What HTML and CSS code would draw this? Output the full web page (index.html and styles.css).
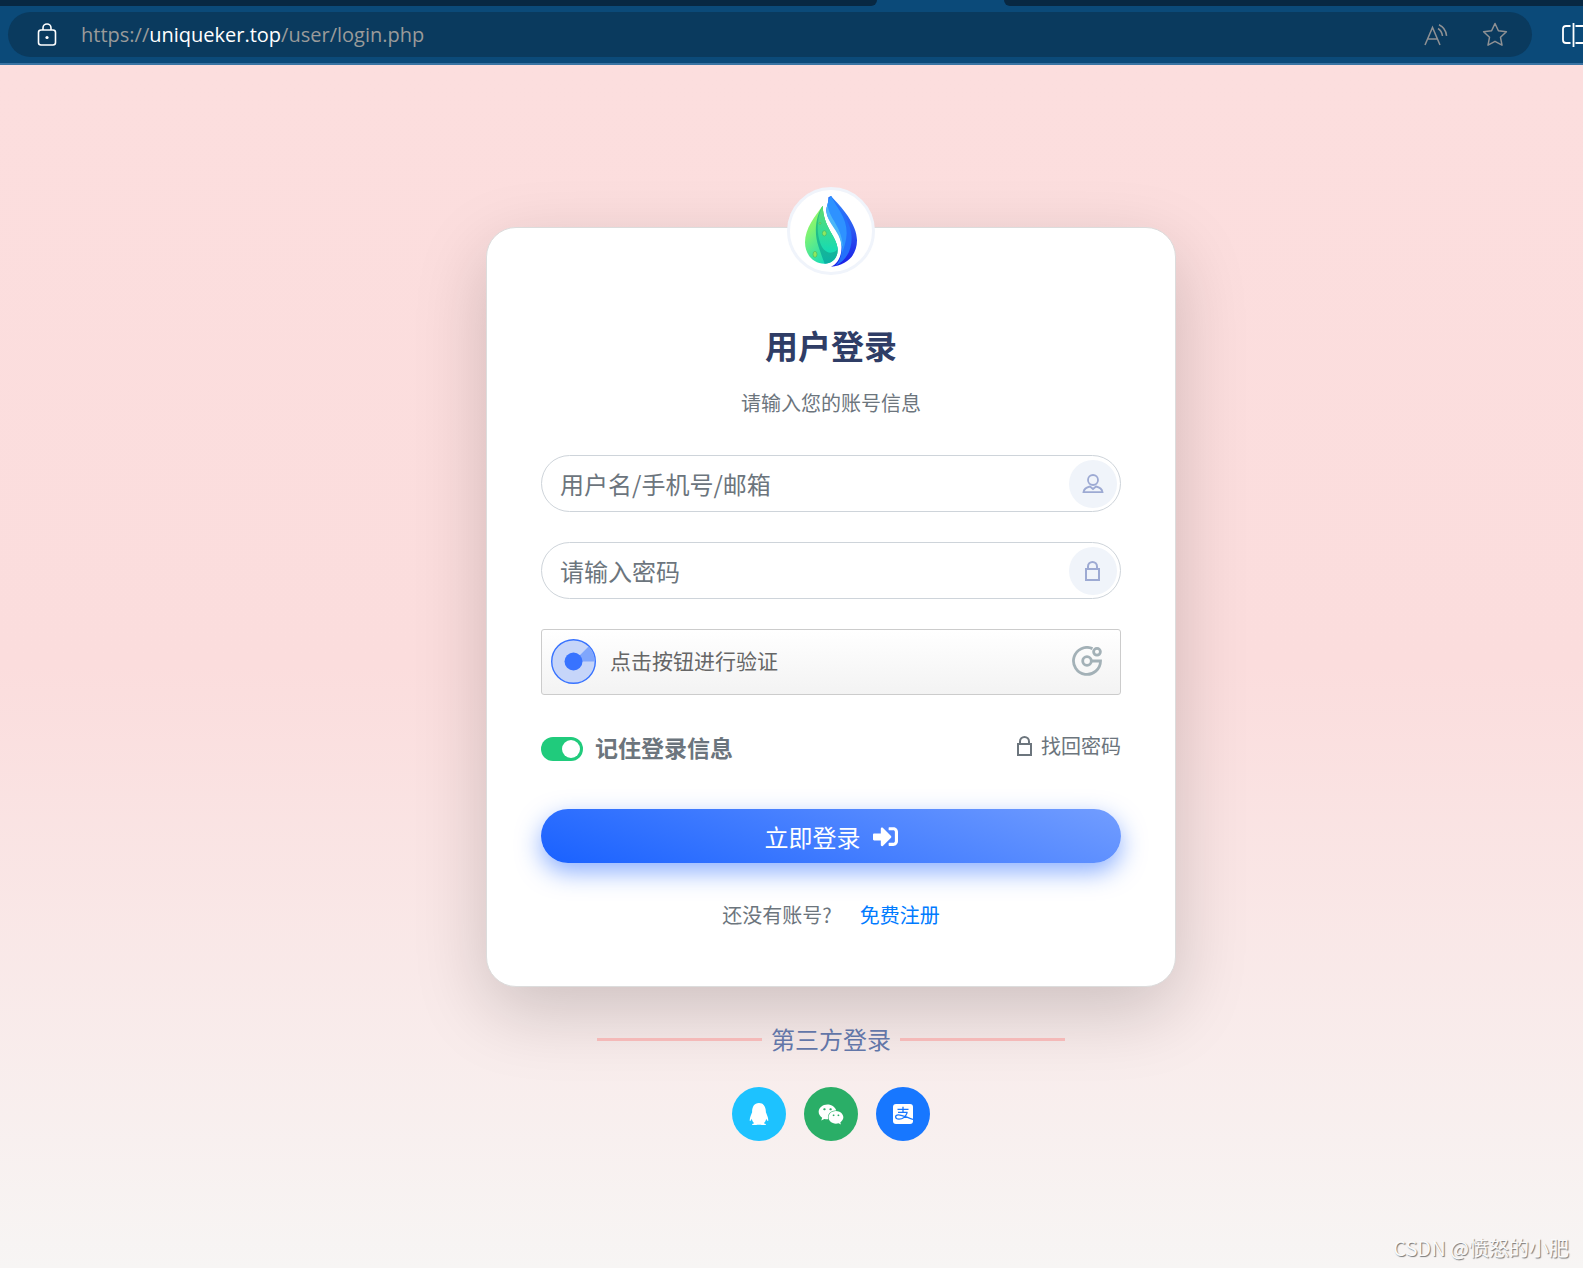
FILE: index.html
```html
<!DOCTYPE html>
<html lang="zh-CN">
<head>
  <meta charset="utf-8">
  <title>用户登录</title>
  <link rel="stylesheet" href="styles.css">
</head>
<body>
  <header class="browser">
    <div class="tabs">
      <span class="tab tab-left"></span>
      <span class="tab tab-right"></span>
    </div>
    <div class="toolbar">
      <div class="address">
        <svg class="site-lock" viewBox="0 0 20 24" fill="none" stroke="#fff" stroke-width="1.6">
          <rect x="1.500" y="7" width="17" height="15" rx="2.5"/>
          <path d="M6 7V5a4 4 0 0 1 8 0v2"/>
          <circle cx="10" cy="14.500" r="1.600" fill="#fff" stroke="none"/>
        </svg>
        <p class="url">https://<span class="host">uniqueker.top</span>/user/login.php</p>
        <svg class="read-aloud" viewBox="0 0 24 22" fill="none" stroke="#8f9194" stroke-width="1.500">
          <path d="M1 21 8.500 3.500 16 21M4 15h9M14 4.500c2.500 1.500 4 4 4.500 7.500M15 .8c4.500 2 7 6 7.600 11"/>
        </svg>
        <svg class="star" viewBox="0 0 26 25" fill="none" stroke="#8f9194" stroke-width="1.500" stroke-linejoin="round">
          <path d="m13 1.500 3.400 7.300 8 1-5.900 5.500 1.500 7.900-7-3.900-7 3.900 1.500-7.900L1.600 9.800l8-1z"/>
        </svg>
      </div>
      <svg class="split" viewBox="0 0 26 26" fill="none" stroke="#fff" stroke-width="1.800">
        <path d="M8.500 4H4a3 3 0 0 0-3 3v11a3 3 0 0 0 3 3h4.500M13.500 4H22a3 3 0 0 1 3 3v11a3 3 0 0 1-3 3h-8.500"/>
        <path d="M11.500 1v24"/>
      </svg>
    </div>
  </header>

  <main class="page">
    <section class="card">
      <div class="logo">
        <svg viewBox="63 63 240 240">
          <defs>
            <linearGradient id="leaf" x1="0" y1="0" x2=".6" y2="1">
              <stop offset="0" stop-color="#a5fb60"/><stop offset=".4" stop-color="#7df374"/><stop offset="1" stop-color="#14dbbb"/>
            </linearGradient>
            <linearGradient id="leafMid" x1="0" y1="0" x2="0" y2="1">
              <stop offset="0" stop-color="#5fdc6e"/><stop offset="1" stop-color="#14dbb5"/>
            </linearGradient>
            <linearGradient id="leafDark" x1="0" y1="0" x2="0" y2="1">
              <stop offset="0" stop-color="#35c96f"/><stop offset="1" stop-color="#0bb0a5"/>
            </linearGradient>
            <linearGradient id="water" x1="0" y1="0" x2="0" y2="1">
              <stop offset="0" stop-color="#2f86fb"/><stop offset=".5" stop-color="#2b55f0"/><stop offset="1" stop-color="#1a1de6"/>
            </linearGradient>
          </defs>
          <path fill="url(#leaf)" d="M158 107C135 139 105 174 105 217c0 38 26 64 58 64 22 0 41-17 40-42-2-40-43-65-45-132z"/>
          <path fill="url(#leafDark)" d="M158 107c-20 30-28 78-12 124 8 24 14 40 18 50 22 0 40-17 39-42-2-40-43-65-45-132z"/>
          <path fill="url(#leafMid)" d="M158 107c-16 30-18 72-10 104 7 28 24 41 40 36 8-2 12-6 15-11-3-40-43-62-45-129z"/>
          <path fill="url(#water)" d="M183 78c31 33 78 83 78 133 0 46-32 76-78 79 22-9 33-36 32-63-2-55-60-78-43-122 2-10 5-17 11-27z"/>
          <path fill="#2470fb" d="M183 78c22 35 62 75 62 125 0 40-18 70-50 85 16-14 21-38 20-61 0-52-46-90-40-145z"/>
          <path fill="#2e92ff" d="M183 78c16 33 48 64 47 112-1 22-7 43-14 60 2-15 0-30-2-37-12-43-54-68-42-108 2-10 5-17 11-27z"/>
          <path fill="#4bb6f8" d="M173 104c3 40 42 64 45 122l-3 5c-2-52-54-74-44-120z"/>
          <g fill="#8fe75f" stroke="#45bb64" stroke-width="2">
            <ellipse cx="163" cy="190" rx="6" ry="8"/><ellipse cx="135" cy="253" rx="6" ry="9"/><circle cx="150" cy="160" r="3"/>
          </g>
        </svg>
      </div>

      <h1 class="title">用户登录</h1>
      <p class="subtitle">请输入您的账号信息</p>

      <form class="form">
        <div class="field">
          <input class="field-input" type="text" aria-label="用户名" placeholder="用户名/手机号/邮箱">
          <span class="field-icon">
            <svg class="icon-user" viewBox="0 0 22 20" fill="none" stroke="#9daad3" stroke-width="1.800">
              <circle cx="11" cy="6" r="5"/>
              <path d="M8 12.500c-3.500.7-6 2.500-6.500 5.700h19c-.5-3.200-3-5-6.500-5.700L11 15z"/>
            </svg>
          </span>
        </div>
        <div class="field">
          <input class="field-input" type="password" aria-label="密码" placeholder="请输入密码">
          <span class="field-icon">
            <svg class="icon-lock" viewBox="0 0 16 20" fill="none" stroke="#9daad3" stroke-width="2">
              <path d="M1 8h13v11H1zM3 8V5.500a4.500 4.500 0 0 1 9 0V8"/>
            </svg>
          </span>
        </div>

        <button class="captcha" type="button">
          <svg class="radar" viewBox="0 0 45 45">
            <circle cx="22.500" cy="22.500" r="21.800" fill="#c6d5f9" stroke="#3873ff" stroke-width="1.400"/>
            <path d="M22.500 22.500 37.600 7.400A21.300 21.300 0 0 1 43.800 22.500z" fill="#80a6fc"/>
            <circle cx="22.500" cy="22.500" r="9" fill="#3873ff"/>
          </svg>
          <span class="captcha-text">点击按钮进行验证</span>
          <svg class="captcha-mark" viewBox="0 0 30 30" fill="none" stroke="#a3b1b7" stroke-width="2.800">
            <path d="M20.500 2.600A13.500 13.500 0 1 0 28.500 15H19"/>
            <circle cx="15" cy="15" r="4.300"/>
            <circle cx="25" cy="5.800" r="3.400"/>
          </svg>
        </button>

        <div class="options">
          <label class="remember">
            <input class="switch" type="checkbox" checked>
            <span class="remember-text">记住登录信息</span>
          </label>
          <a class="forgot" href="#">
            <svg class="icon-lock" viewBox="0 0 16 20" fill="none" stroke="#6c757d" stroke-width="2">
              <path d="M1 8h13v11H1zM3 8V5.500a4.500 4.500 0 0 1 9 0V8"/>
            </svg>
            <span>找回密码</span>
          </a>
        </div>

        <button class="submit" type="submit">
          <span>立即登录</span>
          <svg class="icon-enter" viewBox="0 0 512 512" fill="currentColor">
            <path d="M416 448h-84c-6.600 0-12-5.400-12-12v-40c0-6.600 5.400-12 12-12h84c17.700 0 32-14.300 32-32V160c0-17.700-14.300-32-32-32h-84c-6.600 0-12-5.400-12-12V76c0-6.600 5.400-12 12-12h84c53 0 96 43 96 96v192c0 53-43 96-96 96zm-47-201L201 79c-15-15-41-4.500-41 17v96H24c-13.300 0-24 10.700-24 24v96c0 13.300 10.700 24 24 24h136v96c0 21.500 26 32 41 17l168-168c9.300-9.400 9.300-24.600 0-34z"/>
          </svg>
        </button>
      </form>

      <p class="signup"><span>还没有账号?</span><a class="signup-link" href="#">免费注册</a></p>
    </section>

    <div class="divider"><span>第三方登录</span></div>

    <nav class="social">
      <a class="social-link qq" href="#" aria-label="QQ">
        <svg class="icon-qq" viewBox="0 0 448 512" fill="#fff">
          <path d="M433.754 420.445c-11.526 1.393-44.860-52.741-44.860-52.741 0 31.345-16.136 72.247-51.051 101.786 16.842 5.192 54.843 19.167 45.803 34.421-7.316 12.343-125.510 7.881-159.632 4.037-34.122 3.844-152.316 8.306-159.632-4.037-9.045-15.250 28.918-29.214 45.783-34.415-34.920-29.539-51.059-70.445-51.059-101.792 0 0-33.334 54.134-44.859 52.741-5.370-.65-12.424-29.644 9.347-99.704 10.261-33.024 21.995-60.478 40.144-105.779C60.683 98.063 108.982.006 224 0c113.737.006 163.156 96.133 160.264 214.963 18.118 45.223 29.912 72.850 40.144 105.778 21.768 70.060 14.716 99.053 9.346 99.704z"/>
        </svg>
      </a>
      <a class="social-link wechat" href="#" aria-label="微信">
        <svg class="icon-wechat" viewBox="0 0 576 512" fill="#fff">
          <path d="M385.200 167.600c6.400 0 12.600.3 18.800 1.100C387.400 90.300 303.300 32 207.700 32 100.500 32 13 104.800 13 197.400c0 53.400 29.300 97.500 77.900 131.600l-19.300 58.600 68-34.100c24.400 4.800 43.800 9.700 68.200 9.700 6.200 0 12.100-.3 18.300-.8-4-12.900-6.200-26.600-6.200-40.800-.1-84.900 72.900-154 165.300-154zm-104.500-52.900c14.500 0 24.200 9.700 24.200 24.400 0 14.500-9.700 24.200-24.200 24.200-14.800 0-29.300-9.700-29.300-24.200.1-14.700 14.600-24.400 29.300-24.400zm-136.400 48.600c-14.500 0-29.300-9.700-29.300-24.200 0-14.800 14.800-24.400 29.300-24.400 14.800 0 24.400 9.700 24.400 24.400 0 14.600-9.600 24.200-24.400 24.200zM563 319.400c0-77.900-77.900-141.300-165.400-141.300-92.700 0-165.400 63.400-165.400 141.300S305 460.700 397.600 460.700c19.300 0 38.900-5.100 58.600-9.900l53.400 29.300-14.800-48.600C534 402.100 563 363.200 563 319.400zm-219.100-24.500c-9.700 0-19.300-9.700-19.300-19.600 0-9.700 9.700-19.300 19.300-19.300 14.800 0 24.400 9.700 24.400 19.300 0 10-9.700 19.600-24.400 19.600zm107.100 0c-9.700 0-19.300-9.700-19.300-19.600 0-9.700 9.700-19.300 19.300-19.300 14.500 0 24.400 9.700 24.400 19.300.1 10-9.900 19.600-24.400 19.600z"/>
        </svg>
      </a>
      <a class="social-link alipay" href="#" aria-label="支付宝">
        <svg class="icon-alipay" viewBox="0 0 20 20">
          <rect width="20" height="20" rx="3" fill="#fff"/>
          <path d="M4.500 5.300h11M5 8.400h9.500M10 2.800v5.600M14.300 8.400c-1.300 3.600-4.500 6.700-8.300 6.700-4.400 0-4.300-4.300-.7-4.300 4 0 8.200 2.400 14.700 4.700" fill="none" stroke="#1777ff" stroke-width="1.300"/>
        </svg>
      </a>
    </nav>
    <p class="watermark">CSDN @愤怒的小肥</p>
  </main>
</body>
</html>
```
FILE: styles.css
```css
* {
  box-sizing: border-box;
}

body {
  margin: 0;
  min-height: 100vh;
  display: flex;
  flex-direction: column;
  overflow-x: hidden;
  font-family: "Noto Sans CJK SC", "Liberation Sans", sans-serif;
  font-size: 20px;
  color: #6c757d;
}

h1,
p {
  margin: 0;
}

a {
  color: inherit;
  text-decoration: none;
}

button,
input {
  font-family: inherit;
}

svg {
  display: block;
  flex: none;
}

/* Browser chrome */
.browser {
  background: #0b4a79;
  border-bottom: 2px solid #3a74a3;
}

.tabs {
  display: flex;
  justify-content: space-between;
  height: 6px;
}

.tab {
  background: #082842;
}

.tab-left {
  width: 877px;
  border-bottom-right-radius: 6px;
}

.tab-right {
  width: 579px;
  border-bottom-left-radius: 6px;
}

.toolbar {
  display: flex;
  align-items: center;
  gap: 30px;
  padding: 6px 0 6px 8px;
  overflow: hidden;
  margin-right: -5px;
}

.address {
  flex: 1;
  display: flex;
  align-items: center;
  height: 45px;
  padding: 0 24px 0 29px;
  border-radius: 23px;
  background: #0a3a5e;
}

.site-lock {
  width: 20px;
  height: 24px;
}

.url {
  flex: 1;
  margin-left: 24px;
  font-family: "Open Sans", "Noto Sans", sans-serif;
  font-size: 20px;
  line-height: 30px;
  color: #9a9a9a;
}

.host {
  color: #fff;
}

.read-aloud {
  width: 24px;
  height: 22px;
  margin-right: 34px;
}

.star {
  width: 26px;
  height: 25px;
}

.split {
  width: 26px;
  height: 26px;
}

/* The content is centred a little to the right of the window */
.page {
  position: relative;
  flex: 1;
  display: flex;
  flex-direction: column;
  align-items: center;
  padding: 162px 0 0 79px;
  background: linear-gradient(180deg, #fcdede 0%, #fbdddd 50%, #f7f5f4 100%);
}

.card {
  position: relative;
  width: 690px;
  padding: 97px 54px 56px;
  border: 1px solid #dcdcdc;
  border-radius: 30px;
  background: #fff;
  box-shadow: 0 24px 72px rgba(0, 0, 0, 0.175);
}

.logo {
  position: absolute;
  top: -41px;
  left: calc(50% - 44px);
  width: 88px;
  height: 88px;
  padding: 1px;
  border: 3px solid #f0f4fb;
  border-radius: 50%;
  background: #fff;
}

.title {
  margin-bottom: 23px;
  font-size: 33px;
  line-height: 40px;
  text-align: center;
  color: #2f3d66;
}

.subtitle {
  margin-bottom: 37px;
  line-height: 30px;
  text-align: center;
}

.form {
  display: flex;
  flex-direction: column;
}

.field {
  display: flex;
  align-items: center;
  height: 57px;
  margin-bottom: 30px;
  padding: 0 3px 0 18px;
  border: 1px solid #ced4da;
  border-radius: 29px;
}

.field-input {
  flex: 1;
  min-width: 0;
  height: 48px;
  padding: 0;
  border: 0;
  outline: 0;
  background: transparent;
  font-size: 24px;
  color: #495057;
}

.field-input::placeholder {
  color: #6c757d;
}

.field-icon {
  display: grid;
  place-items: center;
  width: 48px;
  height: 48px;
  border-radius: 50%;
  background: #f0f4fa;
}

.icon-user {
  width: 22px;
  height: 20px;
}

.icon-lock {
  width: 16px;
  height: 20px;
}

.captcha {
  display: flex;
  align-items: center;
  gap: 14px;
  height: 66px;
  padding: 0 18px 2px 9px;
  border: 1px solid #ccc;
  border-radius: 3px;
  background: linear-gradient(180deg, #fff, #f3f3f3);
  font-size: 21px;
  color: #666;
}

.radar {
  width: 45px;
  height: 45px;
}

.captcha-text {
  flex: 1;
  padding-bottom: 2px;
  text-align: left;
}

.captcha-mark {
  width: 30px;
  height: 30px;
}

.options {
  display: flex;
  justify-content: space-between;
  align-items: flex-start;
  margin: 36px 0 42px;
}

.remember {
  display: flex;
  align-items: center;
  gap: 12px;
  font-size: 23px;
  font-weight: 700;
}

.remember-text {
  padding-bottom: 4px;
  line-height: 32px;
}

.switch {
  appearance: none;
  display: flex;
  justify-content: flex-end;
  width: 42px;
  height: 24px;
  margin: 0;
  padding: 3px;
  border-radius: 12px;
  background: #20cb7c;
}

.switch::before {
  content: "";
  width: 18px;
  height: 18px;
  border-radius: 50%;
  background: #fff;
}

.forgot {
  display: flex;
  align-items: center;
  gap: 8px;
  line-height: 30px;
}

.submit {
  display: flex;
  align-items: center;
  justify-content: center;
  gap: 12px;
  height: 54px;
  padding: 0;
  border: 0;
  border-radius: 27px;
  background: linear-gradient(20deg, #1961ff, #729dff);
  box-shadow: 0 9px 24px rgba(25, 97, 255, 0.5);
  font-size: 24px;
  color: #fff;
}

.icon-enter {
  width: 25px;
  height: 25px;
}

.signup {
  display: flex;
  justify-content: center;
  gap: 28px;
  margin-top: 37px;
  line-height: 30px;
}

.signup-link {
  color: #007bff;
}

.divider {
  display: flex;
  align-items: center;
  gap: 9px;
  margin: 34px 0 30px;
  font-size: 24px;
  line-height: 36px;
  color: #6276a8;
}

.divider::before,
.divider::after {
  content: "";
  width: 165px;
  height: 3px;
  background: #f4b9b8;
}

/* Sits above the shadow that the card casts */
.divider,
.social {
  position: relative;
}

.social {
  display: flex;
  gap: 18px;
}

.social-link {
  display: grid;
  place-items: center;
  width: 54px;
  height: 54px;
  border-radius: 50%;
}

.qq {
  background: #1dc2ff;
}

.wechat {
  background: #2aae67;
}

.alipay {
  background: #1777ff;
}

.icon-qq {
  width: 20px;
  height: 22px;
}

.icon-wechat {
  width: 26px;
  height: 23px;
}

.icon-alipay {
  width: 20px;
  height: 20px;
}

.watermark {
  position: absolute;
  right: 14px;
  bottom: 5px;
  line-height: 30px;
  color: #fafafa;
  text-shadow: 1px 1px 1px #777;
}
```
